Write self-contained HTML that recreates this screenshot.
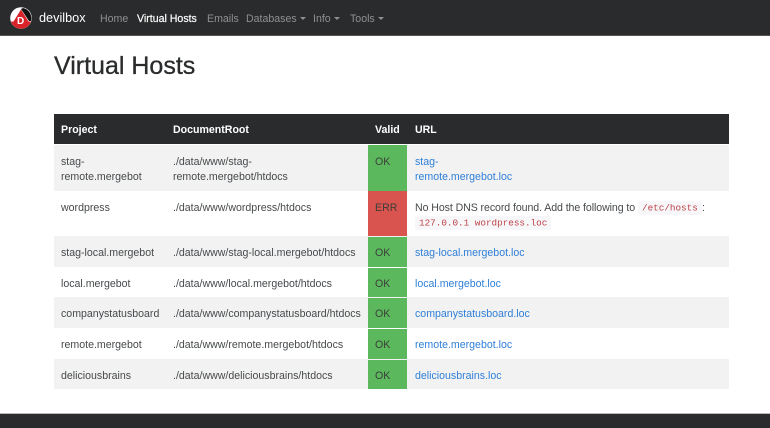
<!DOCTYPE html>
<html><head><meta charset="utf-8">
<style>
html,body{margin:0;padding:0;width:770px;height:428px;overflow:hidden;background:#fff;font-family:"Liberation Sans",sans-serif;color:#464a4c}
*{box-sizing:border-box}
#w{position:absolute;left:0;top:0;width:770px;height:428px;filter:blur(.3px)}
.a{position:absolute;white-space:nowrap;font-size:10.6px;line-height:15.5px}
.nav{position:absolute;left:0;top:0;width:770px;height:36px;background:#292b2c;border-bottom:1px solid #555}
.foot{position:absolute;left:0;top:413px;width:770px;height:15px;background:#292b2c;border-top:1px solid #bbb}
.n{color:#8f9091;font-size:10.6px;top:12px}
.caret{display:inline-block;border-top:3px solid currentColor;border-left:3px solid transparent;border-right:3px solid transparent;margin-left:3px;vertical-align:2px}
.r{position:absolute;left:54px;width:675px}
.g{background:#f2f2f2}
.c{position:absolute;left:368px;width:39px}
.ok{background:#5cb85c}
.err{background:#d9534f}
.v{color:#3a3f3a}
a{color:#2f7fd8;text-decoration:none}
code{font-family:"Liberation Mono",monospace;font-size:9.3px;color:#bd4147;background:#f7f7f9;padding:1.5px 4px;border-radius:2px}
.th{color:#fff;font-weight:bold}
.two{line-height:15px;top:155px}
</style></head><body><div id="w">
<div class="nav"></div>
<svg style="position:absolute;left:10px;top:7px" width="22" height="22" viewBox="0 0 22 22"><circle cx="11" cy="11" r="10.8" fill="#fff"/><path d="M13 1A10.5 10.5 0 0 1 21 14L19 14L11 2z" fill="#111"/><path d="M11 2.5L3.5 14.5L1 14.5A10.5 10.5 0 0 0 21 14.5L18.5 14.5z" fill="#d8232a"/></svg>
<div class="a" style="left:17px;top:14px;font-size:10px;font-weight:bold;color:#fff">D</div>
<div class="a" style="left:39px;top:11px;font-size:12.7px;color:#fff">devilbox</div>
<div class="a n" style="left:100px">Home</div>
<div class="a n" style="left:137px;color:#fff;-webkit-text-stroke:.2px #fff">Virtual Hosts</div>
<div class="a n" style="left:207px">Emails</div>
<div class="a n" style="left:246px">Databases<span class="caret"></span></div>
<div class="a n" style="left:313px">Info<span class="caret"></span></div>
<div class="a n" style="left:350px">Tools<span class="caret"></span></div>

<div class="a" style="left:54px;top:51px;font-size:25px;line-height:31px;color:#292b2c;-webkit-text-stroke:.3px #292b2c">Virtual Hosts</div>

<div class="r" style="top:114px;height:30px;background:#292b2c"></div>
<div class="a th" style="left:61px;top:123px">Project</div>
<div class="a th" style="left:173px;top:123px">DocumentRoot</div>
<div class="a th" style="left:375px;top:123px">Valid</div>
<div class="a th" style="left:415px;top:123px">URL</div>

<div class="r g" style="top:145px;height:46px"></div>
<div class="r g" style="top:236px;height:31px"></div>
<div class="r g" style="top:297px;height:31px"></div>
<div class="r g" style="top:359px;height:30px"></div>

<div class="c ok" style="top:145px;height:46px"></div>
<div class="c err" style="top:191px;height:45px"></div>
<div class="c ok" style="top:237px;height:30px"></div>
<div class="c ok" style="top:268px;height:29px"></div>
<div class="c ok" style="top:298px;height:30px"></div>
<div class="c ok" style="top:329px;height:30px"></div>
<div class="c ok" style="top:360px;height:29px"></div>

<div class="a two" style="left:61px">stag-<br>remote.mergebot</div>
<div class="a two" style="left:173px">./data/www/stag-<br>remote.mergebot/htdocs</div>
<div class="a v two" style="left:375px">OK</div>
<div class="a two" style="left:415px"><a>stag-<br>remote.mergebot.loc</a></div>

<div class="a" style="left:61px;top:201px">wordpress</div>
<div class="a" style="left:173px;top:201px">./data/www/wordpress/htdocs</div>
<div class="a v" style="left:375px;top:201px">ERR</div>
<div class="a" style="left:415px;top:201px;letter-spacing:-.08px">No Host DNS record found. Add the following to</div>
<div class="a" style="left:638px;top:200px"><code>/etc/hosts</code></div>
<div class="a" style="left:702px;top:201px">:</div>
<div class="a" style="left:415px;top:215px"><code>127.0.0.1 wordpress.loc</code></div>

<div class="a" style="left:61px;top:246px">stag-local.mergebot</div>
<div class="a" style="left:173px;top:246px">./data/www/stag-local.mergebot/htdocs</div>
<div class="a v" style="left:375px;top:246px">OK</div>
<div class="a" style="left:415px;top:246px"><a>stag-local.mergebot.loc</a></div>

<div class="a" style="left:61px;top:277px">local.mergebot</div>
<div class="a" style="left:173px;top:277px">./data/www/local.mergebot/htdocs</div>
<div class="a v" style="left:375px;top:277px">OK</div>
<div class="a" style="left:415px;top:277px"><a>local.mergebot.loc</a></div>

<div class="a" style="left:61px;top:307px">companystatusboard</div>
<div class="a" style="left:173px;top:307px">./data/www/companystatusboard/htdocs</div>
<div class="a v" style="left:375px;top:307px">OK</div>
<div class="a" style="left:415px;top:307px"><a>companystatusboard.loc</a></div>

<div class="a" style="left:61px;top:338px">remote.mergebot</div>
<div class="a" style="left:173px;top:338px">./data/www/remote.mergebot/htdocs</div>
<div class="a v" style="left:375px;top:338px">OK</div>
<div class="a" style="left:415px;top:338px"><a>remote.mergebot.loc</a></div>

<div class="a" style="left:61px;top:369px">deliciousbrains</div>
<div class="a" style="left:173px;top:369px">./data/www/deliciousbrains/htdocs</div>
<div class="a v" style="left:375px;top:369px">OK</div>
<div class="a" style="left:415px;top:369px"><a>deliciousbrains.loc</a></div>

<div class="foot"></div>
</div></body></html>
